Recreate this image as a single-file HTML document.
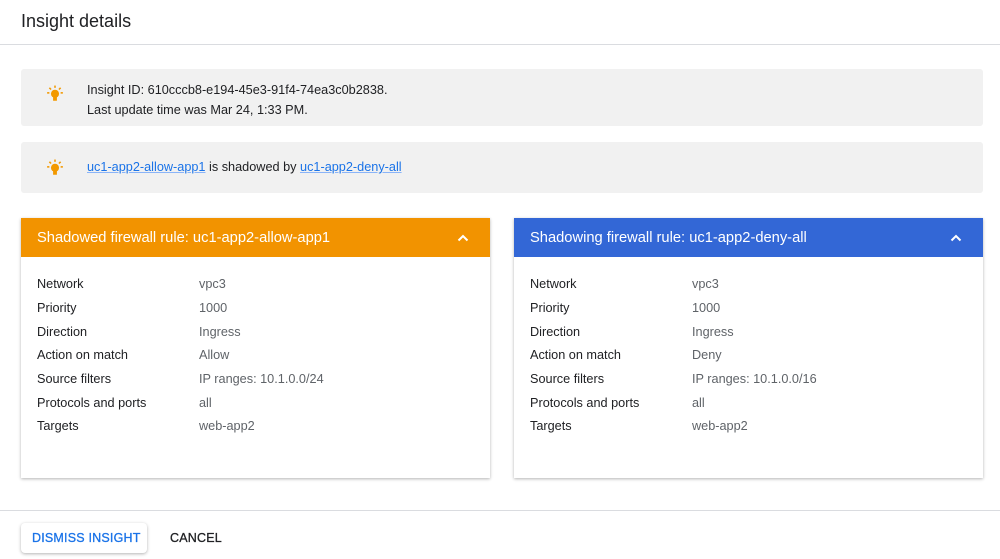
<!DOCTYPE html>
<html><head><style>
*{box-sizing:border-box;margin:0;padding:0}
body{width:1000px;height:559px;background:#fff;font-family:"Liberation Sans",sans-serif;color:#202124;position:relative;overflow:hidden}
.title{position:absolute;left:21px;top:11px;font-size:18px}
.hr{position:absolute;left:0;width:1000px;height:1px;background:#dadce0}
.box{position:absolute;left:21px;width:962px;background:#f1f1f1;border-radius:3px;font-size:12.7px}
.bulb{position:absolute;left:25px}
a{color:#1a73e8;text-decoration:underline;text-decoration-color:#8ab4f8}
.card{position:absolute;top:218px;width:469px;height:260px;background:#fff;box-shadow:0 1px 3px rgba(0,0,0,.3)}
.hd{height:39px;color:#fff;font-size:14.7px;padding:12px 16px;position:relative}
.hd svg{position:absolute;right:21px;top:16px}
.row{position:absolute;font-size:12.7px;white-space:nowrap}
.k{left:16px;color:#202124}
.v{left:178px;color:#5f6368}
.btn{position:absolute;top:523px;height:30px;font-size:12.5px;padding:8px 11px;letter-spacing:.2px;white-space:nowrap;-webkit-text-stroke:.3px}
</style></head><body>
<div class="title">Insight details</div>
<div class="hr" style="top:44px"></div>
<div class="box" style="top:69px;height:57px">
<svg class="bulb" style="top:16px" width="18" height="18" viewBox="0 0 16 16"><g stroke="#f29900" stroke-width="1.4"><line x1="8" y1="0.5" x2="8" y2="2.5"/><line x1="1" y1="7" x2="3" y2="7"/><line x1="13" y1="7" x2="15" y2="7"/><line x1="3" y1="2.5" x2="4.5" y2="4"/><line x1="13" y1="2.5" x2="11.5" y2="4"/></g><circle cx="8" cy="7.8" r="3.6" fill="#f29900"/><rect x="6.3" y="10.5" width="3.4" height="3.5" fill="#f29900"/></svg>
<div style="position:absolute;left:66px;top:11px;line-height:20px">Insight ID: 610cccb8-e194-45e3-91f4-74ea3c0b2838.<br>Last update time was Mar 24, 1:33 PM.</div></div>
<div class="box" style="top:142px;height:51px">
<svg class="bulb" style="top:17px" width="18" height="18" viewBox="0 0 16 16"><g stroke="#f29900" stroke-width="1.4"><line x1="8" y1="0.5" x2="8" y2="2.5"/><line x1="1" y1="7" x2="3" y2="7"/><line x1="13" y1="7" x2="15" y2="7"/><line x1="3" y1="2.5" x2="4.5" y2="4"/><line x1="13" y1="2.5" x2="11.5" y2="4"/></g><circle cx="8" cy="7.8" r="3.6" fill="#f29900"/><rect x="6.3" y="10.5" width="3.4" height="3.5" fill="#f29900"/></svg>
<div style="position:absolute;left:66px;top:18px"><a>uc1-app2-allow-app1</a> is shadowed by <a>uc1-app2-deny-all</a></div></div>

<div class="card" style="left:21px"><div class="hd" style="background:#f29300">Shadowed firewall rule: uc1-app2-allow-app1<svg width="12" height="8" viewBox="0 0 12 8"><path d="M1.5 6.5L6 2l4.5 4.5" stroke="#fff" stroke-width="2" fill="none"/></svg></div>
<div class="row k" style="top:59px">Network</div><div class="row v" style="top:59px">vpc3</div>
<div class="row k" style="top:83px">Priority</div><div class="row v" style="top:83px">1000</div>
<div class="row k" style="top:107px">Direction</div><div class="row v" style="top:107px">Ingress</div>
<div class="row k" style="top:130px">Action on match</div><div class="row v" style="top:130px">Allow</div>
<div class="row k" style="top:154px">Source filters</div><div class="row v" style="top:154px">IP ranges: 10.1.0.0/24</div>
<div class="row k" style="top:178px">Protocols and ports</div><div class="row v" style="top:178px">all</div>
<div class="row k" style="top:201px">Targets</div><div class="row v" style="top:201px">web-app2</div>
</div>
<div class="card" style="left:514px"><div class="hd" style="background:#3367d6">Shadowing firewall rule: uc1-app2-deny-all<svg width="12" height="8" viewBox="0 0 12 8"><path d="M1.5 6.5L6 2l4.5 4.5" stroke="#fff" stroke-width="2" fill="none"/></svg></div>
<div class="row k" style="top:59px">Network</div><div class="row v" style="top:59px">vpc3</div>
<div class="row k" style="top:83px">Priority</div><div class="row v" style="top:83px">1000</div>
<div class="row k" style="top:107px">Direction</div><div class="row v" style="top:107px">Ingress</div>
<div class="row k" style="top:130px">Action on match</div><div class="row v" style="top:130px">Deny</div>
<div class="row k" style="top:154px">Source filters</div><div class="row v" style="top:154px">IP ranges: 10.1.0.0/16</div>
<div class="row k" style="top:178px">Protocols and ports</div><div class="row v" style="top:178px">all</div>
<div class="row k" style="top:201px">Targets</div><div class="row v" style="top:201px">web-app2</div>
</div>
<div class="hr" style="top:510px"></div>
<div class="btn" style="left:21px;width:126px;color:#1a73e8;box-shadow:0 1px 3px rgba(0,0,0,.3);border-radius:4px">DISMISS INSIGHT</div>
<div class="btn" style="left:159px;color:#202124">CANCEL</div>
</body></html>
